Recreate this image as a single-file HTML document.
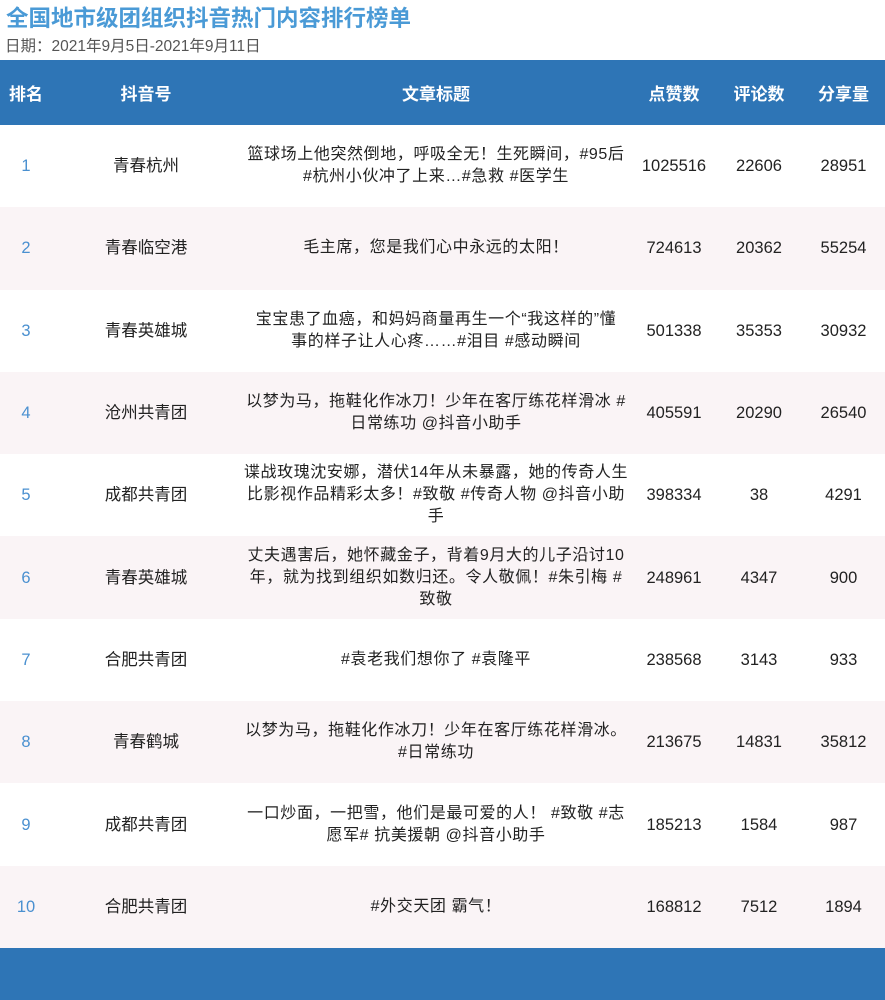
<!DOCTYPE html>
<html><head><meta charset="utf-8"><style>
body{margin:0;width:885px;height:1000px;overflow:hidden;background:#fff;font-family:"Liberation Sans","Noto Sans CJK SC",sans-serif;}
.t{position:absolute;left:6px;top:4px;font-size:22.5px;font-weight:bold;color:#4a9ad6;line-height:30px;white-space:nowrap}
.d{position:absolute;left:5px;top:37px;font-size:15.5px;color:#555;line-height:20px}
table{position:absolute;top:60px;left:0;width:885px;border-collapse:collapse;table-layout:fixed}
th{background:#2e75b6;color:#fff;font-size:17px;font-weight:bold;height:65px;padding:0;text-align:center}
td{height:82.3px;padding:0;text-align:center;font-size:16.5px;color:#222;line-height:22px}
tr:nth-child(odd) td{background:#faf4f6}
td.r{color:#4a90d0}
td.ti{padding:0 2px;font-size:16px;letter-spacing:0.6px}
.f{position:absolute;top:948px;left:0;width:885px;height:52px;background:#2e75b6}
</style></head><body>
<div class="t">全国地市级团组织抖音热门内容排行榜单</div>
<div class="d">日期：2021年9月5日-2021年9月11日</div>
<table>
<colgroup><col style="width:52px"><col style="width:188px"><col style="width:392px"><col style="width:84px"><col style="width:86px"><col style="width:83px"></colgroup>
<tr><th>排名</th><th>抖音号</th><th>文章标题</th><th>点赞数</th><th>评论数</th><th>分享量</th></tr>
<tr><td class="r">1</td><td>青春杭州</td><td class="ti">篮球场上他突然倒地，呼吸全无！生死瞬间，#95后<br>#杭州小伙冲了上来…#急救 #医学生</td><td>1025516</td><td>22606</td><td>28951</td></tr>
<tr><td class="r">2</td><td>青春临空港</td><td class="ti">毛主席，您是我们心中永远的太阳！</td><td>724613</td><td>20362</td><td>55254</td></tr>
<tr><td class="r">3</td><td>青春英雄城</td><td class="ti">宝宝患了血癌，和妈妈商量再生一个“我这样的”懂<br>事的样子让人心疼……#泪目 #感动瞬间</td><td>501338</td><td>35353</td><td>30932</td></tr>
<tr><td class="r">4</td><td>沧州共青团</td><td class="ti">以梦为马，拖鞋化作冰刀！少年在客厅练花样滑冰 #<br>日常练功 @抖音小助手</td><td>405591</td><td>20290</td><td>26540</td></tr>
<tr><td class="r">5</td><td>成都共青团</td><td class="ti">谍战玫瑰沈安娜，潜伏14年从未暴露，她的传奇人生<br>比影视作品精彩太多！#致敬 #传奇人物 @抖音小助<br>手</td><td>398334</td><td>38</td><td>4291</td></tr>
<tr><td class="r">6</td><td>青春英雄城</td><td class="ti">丈夫遇害后，她怀藏金子，背着9月大的儿子沿讨10<br>年，就为找到组织如数归还。令人敬佩！#朱引梅 #<br>致敬</td><td>248961</td><td>4347</td><td>900</td></tr>
<tr><td class="r">7</td><td>合肥共青团</td><td class="ti">#袁老我们想你了 #袁隆平</td><td>238568</td><td>3143</td><td>933</td></tr>
<tr><td class="r">8</td><td>青春鹤城</td><td class="ti">以梦为马，拖鞋化作冰刀！少年在客厅练花样滑冰。<br>#日常练功</td><td>213675</td><td>14831</td><td>35812</td></tr>
<tr><td class="r">9</td><td>成都共青团</td><td class="ti">一口炒面，一把雪，他们是最可爱的人！ #致敬 #志<br>愿军# 抗美援朝 @抖音小助手</td><td>185213</td><td>1584</td><td>987</td></tr>
<tr><td class="r">10</td><td>合肥共青团</td><td class="ti">#外交天团 霸气！</td><td>168812</td><td>7512</td><td>1894</td></tr>
</table>
<div class="f"></div>
</body></html>
